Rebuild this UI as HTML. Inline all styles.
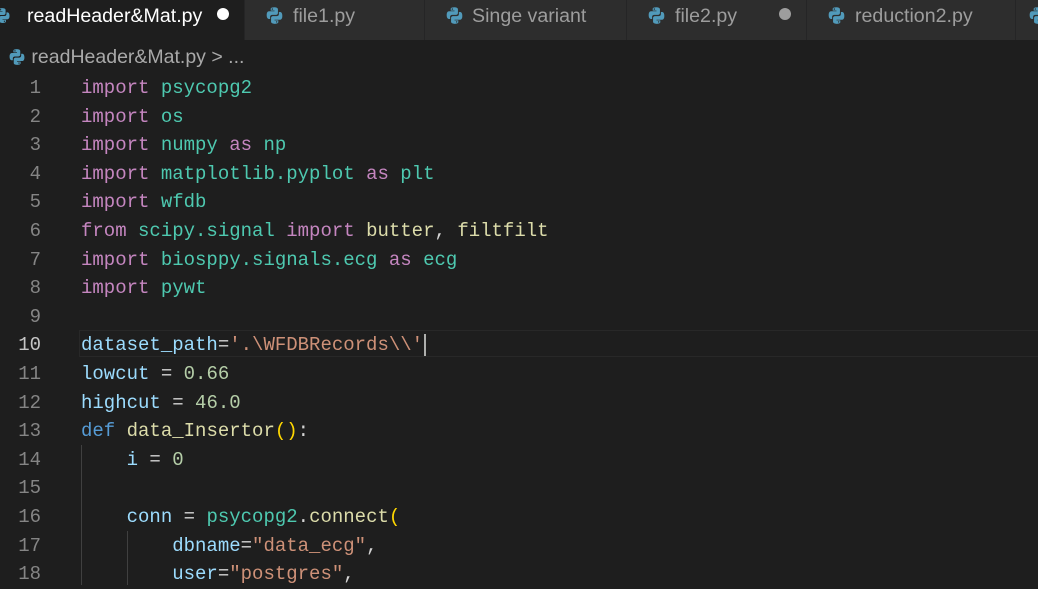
<!DOCTYPE html>
<html><head><meta charset="utf-8"><style>
body{margin:0;width:1038px;height:585px;background:#1e1e1e;overflow:hidden;font-family:"Liberation Sans",sans-serif;position:relative}
.tabs{position:absolute;top:0;left:0;width:1038px;height:40px;background:#252526}
.tab{position:absolute;top:0;height:40px;background:#2d2d2d;border-right:1px solid #252526;color:#9d9d9d;font-size:19.6px;line-height:33px;box-sizing:border-box}
.tab.active{background:#1e1e1e;color:#fff}
.tab svg{position:absolute;top:6px}
.tab span{position:absolute;top:0}
.dot{position:absolute;width:12px;height:12px;border-radius:50%;top:8px}
.bc{position:absolute;top:43px;left:8px;color:#a9a9a9;font-size:19.5px;line-height:28px}
.code{position:absolute;top:74px;left:0;font-family:"Liberation Mono",monospace;font-size:19px}
.l{height:28.6px;line-height:28.6px;white-space:pre;position:relative}
.n{position:absolute;left:0;width:41px;text-align:right;color:#858585}
.t{position:absolute;left:81px;color:#d4d4d4}
.k{color:#c586c0}.m{color:#4ec9b0}.v{color:#9cdcfe}.nu{color:#b5cea8}.s{color:#ce9178}.d{color:#569cd6}.f{color:#dcdcaa}.p{color:#ffd700}
.g{position:absolute;width:1px;background:#404040}
</style></head><body>
<svg width="0" height="0" style="position:absolute"><defs><symbol id="py" viewBox="0 0 16 16"><path fill="#519aba" d="M7.9 1C4.6 1 4.8 2.4 4.8 2.4v1.5h3.2v.5H3.5S1.4 4.2 1.4 7.6s1.8 3.3 1.8 3.3h1.1V9.3s-.1-1.8 1.8-1.8h3.1s1.7 0 1.7-1.7V2.9S11.2 1 7.9 1zM6.2 2a.6.6 0 110 1.2.6.6 0 010-1.2z"/><path fill="#519aba" d="M8.1 15c3.3 0 3.1-1.4 3.1-1.4v-1.5H8v-.5h4.5s2.1.2 2.1-3.2-1.8-3.3-1.8-3.3h-1.1v1.6s.1 1.8-1.8 1.8H6.8s-1.7 0-1.7 1.7v2.9S4.8 15 8.1 15zm1.7-1a.6.6 0 110-1.2.6.6 0 010 1.2z"/></symbol></defs></svg>
<div class="tabs">
<div class="tab active" style="left:0;width:245px"><svg width="17" height="19" style="left:-6px"><use href="#py"/></svg><span style="left:27px">readHeader&amp;Mat.py</span><div class="dot" style="left:217px;background:#fff"></div></div>
<div class="tab" style="left:245px;width:180px"><svg width="19" height="19" style="left:20px"><use href="#py"/></svg><span style="left:48px">file1.py</span></div>
<div class="tab" style="left:425px;width:202px"><svg width="19" height="19" style="left:20px"><use href="#py"/></svg><span style="left:47px">Singe variant</span></div>
<div class="tab" style="left:627px;width:180px"><svg width="19" height="19" style="left:20px"><use href="#py"/></svg><span style="left:48px">file2.py</span><div class="dot" style="left:152px;background:#9d9d9d"></div></div>
<div class="tab" style="left:807px;width:209px"><svg width="19" height="19" style="left:20px"><use href="#py"/></svg><span style="left:48px">reduction2.py</span></div>
<div class="tab" style="left:1016px;width:30px"><svg width="19" height="19" style="left:12px"><use href="#py"/></svg></div>
</div>
<div class="bc"><svg width="18" height="18" style="vertical-align:-3px"><use href="#py"/></svg> readHeader&amp;Mat.py &gt; ...</div>
<div style="position:absolute;left:79px;top:330px;width:970px;height:27px;border:1px solid #282828;box-sizing:border-box"></div>
<div class="g" style="left:81px;top:445px;height:140px"></div>
<div class="g" style="left:127px;top:531px;height:54px"></div>
<div class="code">
<div class="l"><span class="n">1</span><span class="t"><span class="k">import</span> <span class="m">psycopg2</span></span></div>
<div class="l"><span class="n">2</span><span class="t"><span class="k">import</span> <span class="m">os</span></span></div>
<div class="l"><span class="n">3</span><span class="t"><span class="k">import</span> <span class="m">numpy</span> <span class="k">as</span> <span class="m">np</span></span></div>
<div class="l"><span class="n">4</span><span class="t"><span class="k">import</span> <span class="m">matplotlib.pyplot</span> <span class="k">as</span> <span class="m">plt</span></span></div>
<div class="l"><span class="n">5</span><span class="t"><span class="k">import</span> <span class="m">wfdb</span></span></div>
<div class="l"><span class="n">6</span><span class="t"><span class="k">from</span> <span class="m">scipy.signal</span> <span class="k">import</span> <span class="f">butter</span>, <span class="f">filtfilt</span></span></div>
<div class="l"><span class="n">7</span><span class="t"><span class="k">import</span> <span class="m">biosppy.signals.ecg</span> <span class="k">as</span> <span class="m">ecg</span></span></div>
<div class="l"><span class="n">8</span><span class="t"><span class="k">import</span> <span class="m">pywt</span></span></div>
<div class="l"><span class="n">9</span><span class="t"></span></div>
<div class="l"><span class="n" style="color:#c6c6c6">10</span><span class="t"><span class="v">dataset_path</span>=<span class="s">'.\WFDBRecords\\'</span><span style="border-left:2px solid #aeafad;margin-left:1px"></span></span></div>
<div class="l"><span class="n">11</span><span class="t"><span class="v">lowcut</span> = <span class="nu">0.66</span></span></div>
<div class="l"><span class="n">12</span><span class="t"><span class="v">highcut</span> = <span class="nu">46.0</span></span></div>
<div class="l"><span class="n">13</span><span class="t"><span class="d">def</span> <span class="f">data_Insertor</span><span class="p">()</span>:</span></div>
<div class="l"><span class="n">14</span><span class="t">    <span class="v">i</span> = <span class="nu">0</span></span></div>
<div class="l"><span class="n">15</span><span class="t"></span></div>
<div class="l"><span class="n">16</span><span class="t">    <span class="v">conn</span> = <span class="m">psycopg2</span>.<span class="f">connect</span><span class="p">(</span></span></div>
<div class="l"><span class="n">17</span><span class="t">        <span class="v">dbname</span>=<span class="s">"data_ecg"</span>,</span></div>
<div class="l"><span class="n">18</span><span class="t">        <span class="v">user</span>=<span class="s">"postgres"</span>,</span></div>
</div>
</body></html>
